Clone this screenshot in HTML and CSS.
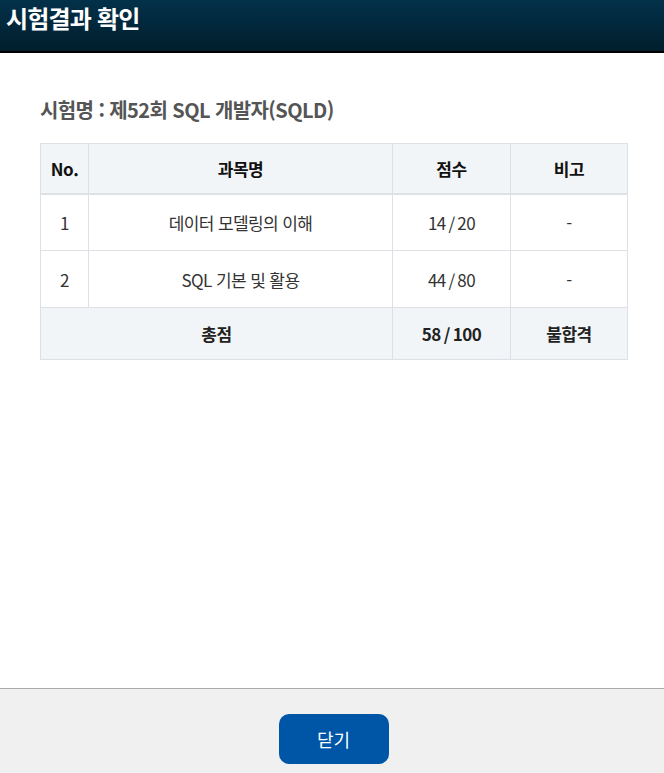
FILE: index.html
```html
<!DOCTYPE html>
<html lang="ko">
<head>
    <meta charset="UTF-8">
    <meta name="viewport" content="width=device-width, initial-scale=1.0">
    <title>시험결과 확인</title>
    <link rel="stylesheet" href="styles.css">
</head>
<body>
    <div class="popup">
        <header class="pop-head">
            <h1 class="pop-title">시험결과 확인</h1>
        </header>
        <section class="pop-body">
            <h2 class="exam-name">시험명 : 제52회 SQL 개발자(SQLD)</h2>
            <table class="result">
                <colgroup>
                    <col class="c-no">
                    <col class="c-name">
                    <col class="c-score">
                    <col class="c-note">
                </colgroup>
                <thead>
                    <tr>
                        <th>No.</th>
                        <th>과목명</th>
                        <th>점수</th>
                        <th>비고</th>
                    </tr>
                </thead>
                <tbody>
                    <tr>
                        <td>1</td>
                        <td>데이터 모델링의 이해</td>
                        <td>14&#8201;/&#8201;20</td>
                        <td>-</td>
                    </tr>
                    <tr>
                        <td>2</td>
                        <td>SQL 기본 및 활용</td>
                        <td>44&#8201;/&#8201;80</td>
                        <td>-</td>
                    </tr>
                    <tr class="total">
                        <th colspan="2">총점</th>
                        <th>58&#8201;/&#8201;100</th>
                        <th>불합격</th>
                    </tr>
                </tbody>
            </table>
        </section>
        <footer class="pop-foot">
            <button class="btn-close">닫기</button>
        </footer>
    </div>
</body>
</html>
```

FILE: styles.css
```css
*{
    box-sizing: border-box;
    font-family: "Noto Sans CJK KR", "Noto Sans", sans-serif;
}
html, body{
    margin: 0;
    padding: 0;
    background: #fff;
}
.popup{
    width: 664px;
    height: 773px;
    display: flex;
    flex-direction: column;
}
.pop-head{
    height: 53px;
    background: linear-gradient(to bottom, #02314a, #011e2c);
    border-bottom: 2px solid #000;
    padding: 0 6px;
}
.pop-title{
    margin: 0;
    color: #fff;
    font-size: 24px;
    font-weight: 700;
    line-height: 36px;
    letter-spacing: -0.8px;
}
.pop-body{
    flex: 1;
    padding: 43px 37px 0 40px;
}
.exam-name{
    margin: 0 0 19px;
    font-size: 20px;
    font-weight: 700;
    color: #555;
    letter-spacing: -0.6px;
    line-height: 28px;
}
.result{
    width: 588px;
    border-collapse: collapse;
    border: 1px solid #dde1e5;
    font-size: 17px;
    color: #333;
}
.c-no{ width: 48px; }
.c-score{ width: 118px; }
.c-note{ width: 117px; }
.result th, .result td{
    border: 1px solid #dde1e5;
    text-align: center;
    padding: 0;
}
.result th{
    background: #f2f5f7;
    color: #111;
    font-weight: 700;
    height: 52px;
    letter-spacing: -0.5px;
}
.result thead th{
    height: 50px;
    border-bottom: 2px solid #dde1e5;
}
.result td{
    height: 57px;
    font-weight: 400;
    letter-spacing: -0.6px;
}
.result .total th{
    color: #222;
}
.pop-foot{
    height: 85px;
    background: #f0f0f0;
    border-top: 1px solid #aaa;
    display: flex;
    justify-content: center;
    padding-top: 25px;
    padding-left: 3px;
}
.btn-close{
    width: 110px;
    height: 50px;
    border: 0;
    border-radius: 10px;
    background: #0056a6;
    color: #fff;
    font-size: 18px;
    cursor: pointer;
}
```
